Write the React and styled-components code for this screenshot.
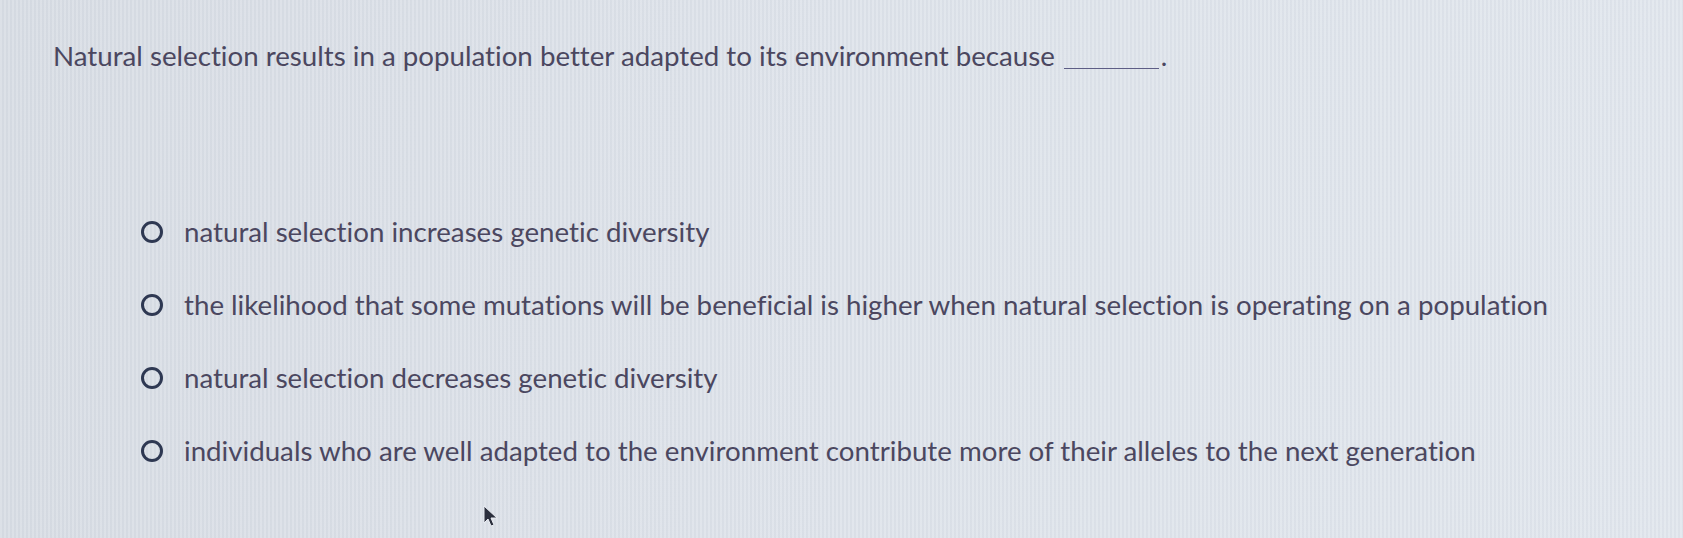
import styled, { createGlobalStyle } from 'styled-components';

const GlobalStyle = createGlobalStyle`
  html, body {
    margin: 0;
    padding: 0;
  }
  body {
    font-family: Lato, "Liberation Sans", sans-serif;
    font-variant-ligatures: none;
  }
`;

const options = [
  'natural selection increases genetic diversity',
  'the likelihood that some mutations will be beneficial is higher when natural selection is operating on a population',
  'natural selection decreases genetic diversity',
  'individuals who are well adapted to the environment contribute more of their alleles to the next generation',
];

const App = () => {
  return (
    <>
      <GlobalStyle />
      <Page>
        <Question>
          Natural selection results in a population better adapted to its environment because<Blank />.
        </Question>
        <Options>
          {options.map((text) => (
            <Option key={text}>
              <Radio />
              <Label>{text}</Label>
            </Option>
          ))}
        </Options>
        <Cursor viewBox='0 0 16 22'>
          <path d='M1 1 L1 18 L5 14 L8 21 L11 20 L8 13 L14 13 Z' fill='#2b2f3d' stroke='#e9ecf2' strokeWidth='1' />
        </Cursor>
      </Page>
    </>
  );
};

export default App;

const Page = styled.div`
  position: relative;
  box-sizing: border-box;
  width: 1683px;
  height: 538px;
  padding: 37px 0 0 53px;
  overflow: hidden;
  background:
    repeating-linear-gradient(90deg, rgba(255, 255, 255, 0.08) 0 2px, rgba(120, 130, 150, 0.05) 2px 4px),
    linear-gradient(90deg, #d9dee5 0%, #dfe4eb 50%, #e2e7ee 100%);
  color: #4b4760;
`;

const Question = styled.p`
  margin: 0;
  font-size: 27.7px;
  line-height: 38px;
`;

const Blank = styled.span`
  display: inline-block;
  width: 95px;
  border-bottom: 1.5px solid #5d5d85;
  margin-left: 9px;
  margin-right: 2px;
  vertical-align: -3px;
`;

const Options = styled.div`
  display: flex;
  flex-direction: column;
  gap: 35px;
  margin: 138px 0 0 88px;
`;

const Option = styled.div`
  display: flex;
  align-items: center;
  gap: 21px;
  height: 38px;
`;

const Radio = styled.span`
  box-sizing: border-box;
  width: 22px;
  height: 22px;
  border: 3.5px solid #2e3852;
  border-radius: 50%;
  flex-shrink: 0;
`;

const Label = styled.span`
  font-size: 27.7px;
  line-height: 38px;
  white-space: nowrap;
`;

const Cursor = styled.svg`
  position: absolute;
  left: 483px;
  top: 505px;
  width: 16px;
  height: 22px;
`;
